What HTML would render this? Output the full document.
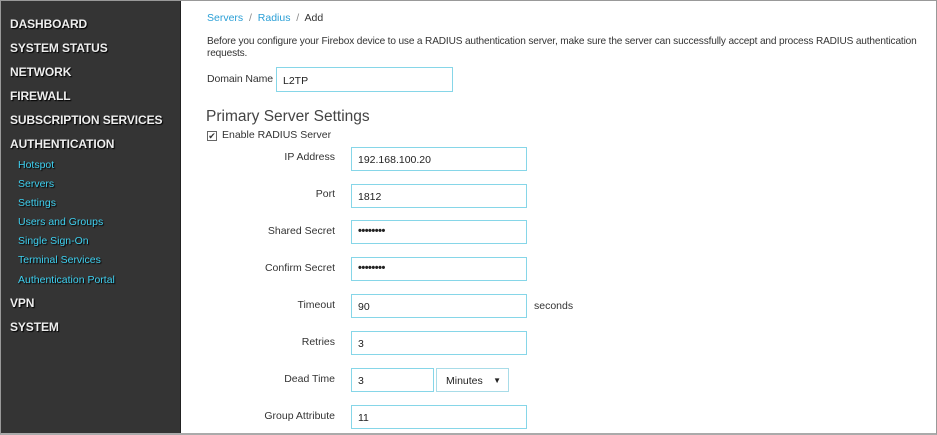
<!DOCTYPE html>
<html><head><style>
*{box-sizing:border-box;margin:0;padding:0}
body{width:937px;height:435px;overflow:hidden;background:#fff;font-family:"Liberation Sans",sans-serif;position:relative}
.frame{position:absolute;left:0;top:0;width:937px;height:435px;border:1px solid #999;border-bottom:2px solid #aaa;pointer-events:none}
.side{position:absolute;left:0;top:0;width:181px;height:435px;background:#343434;border-right:1px solid #222}
.side .m{position:absolute;left:10px;color:#eee;font-weight:bold;font-size:12px;text-shadow:1px 1px 1px #000;letter-spacing:-0.1px}
.side .s{position:absolute;left:18px;color:#3fd0f0;font-size:10.5px;text-shadow:1px 1px 1px #000}
.t{position:absolute;white-space:nowrap}
.bc a{color:#2a9fd6;text-decoration:none}
.inp{position:absolute;border:1px solid #86d6e8;height:24px;width:176px;font-size:10.5px;padding:6px 0 0 6px;color:#222;background:#fff}
.lab{position:absolute;width:150px;text-align:right;font-size:10.5px;color:#333}
</style></head><body>
<div class="side">
<div class="m" style="top:17px">DASHBOARD</div>
<div class="m" style="top:41px">SYSTEM STATUS</div>
<div class="m" style="top:65px">NETWORK</div>
<div class="m" style="top:89px">FIREWALL</div>
<div class="m" style="top:113px">SUBSCRIPTION SERVICES</div>
<div class="m" style="top:137px">AUTHENTICATION</div>
<div class="s" style="top:159px">Hotspot</div>
<div class="s" style="top:178px">Servers</div>
<div class="s" style="top:197px">Settings</div>
<div class="s" style="top:216px">Users and Groups</div>
<div class="s" style="top:235px">Single Sign-On</div>
<div class="s" style="top:254px">Terminal Services</div>
<div class="s" style="top:274px">Authentication Portal</div>
<div class="m" style="top:296px">VPN</div>
<div class="m" style="top:320px">SYSTEM</div>
</div>
<div class="t bc" style="left:207px;top:12px;font-size:10.5px;color:#888"><a>Servers</a> &nbsp;/&nbsp; <a>Radius</a> &nbsp;/&nbsp; <span style="color:#333">Add</span></div>
<div class="t" style="left:207px;top:36px;font-size:10.1px;color:#333;line-height:12px;letter-spacing:-0.15px">Before you configure your Firebox device to use a RADIUS authentication server, make sure the server can successfully accept and process RADIUS authentication<br>requests.</div>
<div class="t" style="left:207px;top:73px;font-size:10.5px;color:#333;letter-spacing:-0.1px">Domain Name</div>
<div class="inp" style="left:276px;top:67px;width:177px;height:25px;padding-top:7px">L2TP</div>
<div class="t" style="left:206px;top:108px;font-size:15.5px;color:#444">Primary Server Settings</div>
<div class="t" style="left:207px;top:129px;font-size:10.5px;color:#333"><span style="display:inline-block;width:10px;height:10px;border:1px solid #666;font-size:9px;line-height:8px;text-align:center;vertical-align:-1px;margin-right:5px">✔</span>Enable RADIUS Server</div>

<div class="lab" style="left:185px;top:151px">IP Address</div><div class="inp" style="left:351px;top:147px">192.168.100.20</div>
<div class="lab" style="left:185px;top:188px">Port</div><div class="inp" style="left:351px;top:184px">1812</div>
<div class="lab" style="left:185px;top:225px">Shared Secret</div><div class="inp" style="left:351px;top:220px;font-size:11px;padding-top:4px;letter-spacing:-0.5px;font-weight:bold">••••••••</div>
<div class="lab" style="left:185px;top:262px">Confirm Secret</div><div class="inp" style="left:351px;top:257px;font-size:11px;padding-top:4px;letter-spacing:-0.5px;font-weight:bold">••••••••</div>
<div class="lab" style="left:185px;top:299px">Timeout</div><div class="inp" style="left:351px;top:294px">90</div>
<div class="t" style="left:534px;top:300px;font-size:10.5px;color:#333">seconds</div>
<div class="lab" style="left:185px;top:336px">Retries</div><div class="inp" style="left:351px;top:331px">3</div>
<div class="lab" style="left:185px;top:373px">Dead Time</div><div class="inp" style="left:351px;top:368px;width:83px">3</div>
<div class="inp" style="left:436px;top:368px;width:73px;border-color:#a8dce8;padding-left:9px">Minutes<span style="position:absolute;right:7px;top:7px;font-size:8px">▼</span></div>
<div class="lab" style="left:185px;top:410px">Group Attribute</div><div class="inp" style="left:351px;top:405px">11</div>
<div class="frame"></div>
</body></html>
